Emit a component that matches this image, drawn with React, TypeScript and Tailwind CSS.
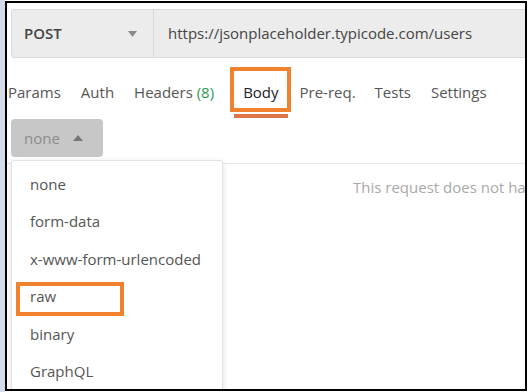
import React from "react";

const font = { fontFamily: '"Open Sans", "Noto Sans", sans-serif' };

export default function App() {
  const items = ["none", "form-data", "x-www-form-urlencoded", "raw", "binary", "GraphQL"];
  return (
    <div className="w-[529px] h-[392px] bg-white flex overflow-hidden" style={font}>
      <div className="w-[5px] h-[392px] bg-[#d3dbe8] shrink-0" />
      <div className="relative mt-[1px] w-[522px] h-[390px] border-2 border-black overflow-hidden bg-white shrink-0">
        {/* URL bar */}
        <div className="ml-[4px] mt-[6px] h-[49px] w-[700px] flex bg-[#ececec] border border-[#dadada] rounded-[3px]">
          <div className="w-[142px] flex items-center justify-between pl-[12px] pr-[16px] border-r border-[#d8d8d8]">
            <span className="text-[15px] font-semibold text-[#444]">POST</span>
            <svg width="9" height="6" viewBox="0 0 9 6"><path d="M0 0 L9 0 L4.5 6 Z" fill="#8a8a8a" /></svg>
          </div>
          <div className="flex items-center pl-[14px] text-[15px] text-[#444]">
            https://jsonplaceholder.typicode.com/users
          </div>
        </div>
        {/* Tabs */}
        <div className="ml-[1px] mt-[14px] h-[40px] flex items-center text-[15px] text-[#555] whitespace-nowrap">
          <span>Params</span>
          <span className="ml-[20px]">Auth</span>
          <span className="ml-[20px]">Headers <span className="text-[#2e9b52]">(8)</span></span>
          <span className="relative ml-[29px] text-[#222]">
            Body
            <span className="absolute left-[-13px] right-[-12px] top-[-14px] bottom-[-9px] border-4 border-[#f0822e]" />
            <span className="absolute left-[-9px] right-[-9px] bottom-[-15px] h-[4px] bg-[#e07444]" />
          </span>
          <span className="ml-[21px]">Pre-req.</span>
          <span className="ml-[19px]">Tests</span>
          <span className="ml-[20px]">Settings</span>
        </div>
        {/* body type dropdown */}
        <div className="ml-[4px] mt-[7px] w-[92px] h-[38px] rounded-[4px] bg-[#c7c7c7] flex items-center pl-[13px] gap-[13px]">
          <span className="text-[15px] text-[#8c8c8c]">none</span>
          <svg width="10" height="6" viewBox="0 0 10 6"><path d="M0 6 L10 6 L5 0 Z" fill="#777" /></svg>
        </div>
        <div className="mt-[6px] h-px bg-[#e6e6e6] w-full" />
        <div className="pl-[346px] pt-[12px] text-[15px] text-[#a9a9a9] whitespace-nowrap">
          This request does not have a body
        </div>
        {/* menu */}
        <div className="absolute left-[4px] top-[157px] w-[212px] h-[260px] bg-white border border-[#e2e2e2] rounded-[3px] shadow-[0_2px_6px_rgba(0,0,0,0.12)] pt-[4px]">
          {items.map((it) => (
            <div key={it} className="relative h-[37.5px] flex items-center pl-[18px] text-[15px] text-[#555]">
              {it}
              {it === "raw" && (
                <span className="absolute left-[4px] top-[4px] w-[108px] h-[34px] border-4 border-[#f0822e]" />
              )}
            </div>
          ))}
        </div>
      </div>
    </div>
  );
}
